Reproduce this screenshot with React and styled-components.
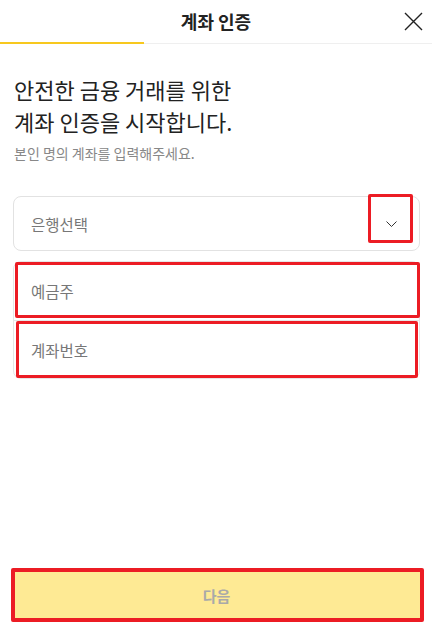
import React from "react";
import styled, { createGlobalStyle } from "styled-components";

const GlobalStyle = createGlobalStyle`
  html, body {
    margin: 0;
    padding: 0;
    background: #fff;
  }
  body {
    font-family: "Noto Sans CJK KR", "Noto Sans", sans-serif;
    color: #222;
  }
  * {
    box-sizing: border-box;
  }
`;

const Page = styled.div`
  display: flex;
  flex-direction: column;
  min-height: 100vh;
`;

const Header = styled.header`
  display: grid;
  grid-template-columns: 1fr auto 1fr;
  align-items: center;
  height: 42px;
`;

const Title = styled.h1`
  grid-column: 2;
  margin: 0;
  font-size: 18px;
  font-weight: 700;
  color: #222;
`;

const CloseButton = styled.button`
  justify-self: end;
  display: flex;
  align-items: center;
  justify-content: center;
  width: 26px;
  height: 26px;
  margin-right: 6px;
  margin-top: 1px;
  padding: 0;
  border: 0;
  background: none;
  cursor: pointer;
`;

const Progress = styled.div`
  display: flex;
  align-items: flex-end;
  height: 2px;
`;

const ProgressFill = styled.div`
  width: ${props => props.percent}%;
  height: 2px;
  background: #f7c81e;
`;

const ProgressRest = styled.div`
  flex: 1;
  height: 1px;
  background: #efefef;
`;

const Content = styled.main`
  display: flex;
  flex-direction: column;
  flex: 1;
  padding: 0 12px 0 13px;
`;

const Heading = styled.h2`
  margin: 29px 0 0 1px;
  font-size: 22px;
  font-weight: 400;
  line-height: 32px;
  color: #222;
`;

const SubText = styled.p`
  margin: 6px 0 0 1px;
  font-size: 14px;
  line-height: 20px;
  color: #888;
`;

const SelectBox = styled.div`
  position: relative;
  display: flex;
  align-items: center;
  justify-content: space-between;
  height: 55px;
  margin-top: 33px;
  padding: 0 22px 0 17px;
  border: 1px solid #e2e2e2;
  border-radius: 8px;
`;

const Placeholder = styled.span`
  font-size: 15.5px;
  color: #777;
`;

const InputGroup = styled.div`
  display: flex;
  flex-direction: column;
  margin-top: 10px;
  border: 1px solid #e6e6e6;
  border-radius: 8px;
`;

const InputRow = styled.div`
  position: relative;
  display: flex;
  align-items: center;
  height: ${props => props.h}px;
  padding-left: 17px;
  border-top: ${props => (props.first ? "0" : "1px solid #e6e6e6")};
`;

const Mark = styled.span`
  position: absolute;
  top: ${props => props.t}px;
  right: ${props => props.r}px;
  bottom: ${props => props.b}px;
  left: ${props => props.l}px;
  border: ${props => props.w || 3.5}px solid #ec1c24;
  border-radius: 2px;
  pointer-events: none;
`;

const Footer = styled.div`
  position: relative;
  margin: auto 12px 9px 13px;
`;

const NextButton = styled.button`
  width: 100%;
  height: 50px;
  border: 0;
  border-radius: 2px;
  background: #feea94;
  color: #a9a9a9;
  font-family: "Noto Sans CJK KR", "Noto Sans", sans-serif;
  font-size: 15px;
  font-weight: 700;
  cursor: not-allowed;
`;

const CloseIcon = () => (
  <svg width="19" height="19" viewBox="0 0 19 19" fill="none">
    <path d="M1 1 L18 18 M18 1 L1 18" stroke="#222" strokeWidth="1.4" />
  </svg>
);

const ChevronIcon = () => (
  <svg width="11" height="6" viewBox="0 0 11 6" fill="none">
    <path d="M0.5 0.5 L5.5 5.5 L10.5 0.5" stroke="#333" strokeWidth="1" />
  </svg>
);

export default function App() {
  return (
    <>
      <GlobalStyle />
      <Page>
        <Header>
          <Title>계좌 인증</Title>
          <CloseButton aria-label="닫기">
            <CloseIcon />
          </CloseButton>
        </Header>
        <Progress>
          <ProgressFill percent={33.4} />
          <ProgressRest />
        </Progress>

        <Content>
          <Heading>
            안전한 금융 거래를 위한
            <br />
            계좌 인증을 시작합니다.
          </Heading>
          <SubText>본인 명의 계좌를 입력해주세요.</SubText>

          <SelectBox>
            <Placeholder>은행선택</Placeholder>
            <ChevronIcon />
            <Mark t={-3} r={6} b={7} l={354} />
          </SelectBox>

          <InputGroup>
            <InputRow first h={58}>
              <Placeholder>예금주</Placeholder>
              <Mark t={0} r={-1} b={2} l={1} />
            </InputRow>
            <InputRow h={58}>
              <Placeholder>계좌번호</Placeholder>
              <Mark t={0} r={1} b={0} l={2} />
            </InputRow>
          </InputGroup>
        </Content>

        <Footer>
          <NextButton disabled>다음</NextButton>
          <Mark t={-2} r={-4} b={-2} l={-2} w={4.5} />
        </Footer>
      </Page>
    </>
  );
}
